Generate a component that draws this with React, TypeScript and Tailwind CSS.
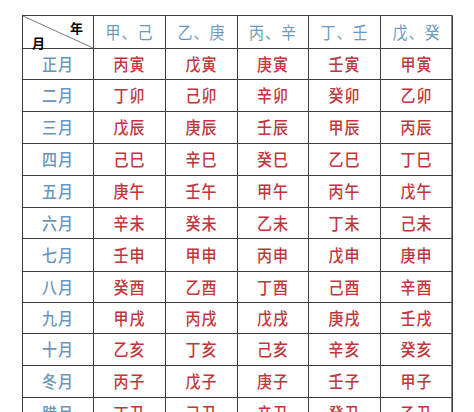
import React from 'react';

const HEADERS = ['甲、己', '乙、庚', '丙、辛', '丁、壬', '戊、癸'];

const ROWS: { month: string; cells: string[]; h: string }[] = [
    { month: '正月', cells: ['丙寅', '戊寅', '庚寅', '壬寅', '甲寅'], h: 'h-[31px]' },
    { month: '二月', cells: ['丁卯', '己卯', '辛卯', '癸卯', '乙卯'], h: 'h-[32px]' },
    { month: '三月', cells: ['戊辰', '庚辰', '壬辰', '甲辰', '丙辰'], h: 'h-[32px]' },
    { month: '四月', cells: ['己巳', '辛巳', '癸巳', '乙巳', '丁巳'], h: 'h-[32px]' },
    { month: '五月', cells: ['庚午', '壬午', '甲午', '丙午', '戊午'], h: 'h-[32px]' },
    { month: '六月', cells: ['辛未', '癸未', '乙未', '丁未', '己未'], h: 'h-[31px]' },
    { month: '七月', cells: ['壬申', '甲申', '丙申', '戊申', '庚申'], h: 'h-[33px]' },
    { month: '八月', cells: ['癸酉', '乙酉', '丁酉', '己酉', '辛酉'], h: 'h-[31px]' },
    { month: '九月', cells: ['甲戌', '丙戌', '戊戌', '庚戌', '壬戌'], h: 'h-[31px]' },
    { month: '十月', cells: ['乙亥', '丁亥', '己亥', '辛亥', '癸亥'], h: 'h-[32px]' },
    { month: '冬月', cells: ['丙子', '戊子', '庚子', '壬子', '甲子'], h: 'h-[32px]' },
    { month: '腊月', cells: ['丁丑', '己丑', '辛丑', '癸丑', '乙丑'], h: 'h-[32px]' },
];

const COLS = 'grid grid-cols-[71px_72px_72px_71px_72px_72px]';
const CELL = 'flex items-center justify-center border-r border-b border-[#3d3d3d]';

export default function App() {
    return (
        <div
            className="h-[412px] w-[474px] overflow-hidden bg-white pt-[15px] pl-[22px]"
            style={{ fontFamily: '"Noto Sans CJK SC", "Noto Sans", sans-serif' }}
        >
            <div className="w-[431px] border-l border-t border-[#3d3d3d] border-r-2 border-r-[#8a8a8a]">
                {/* header */}
                <div className={`${COLS} h-[33px]`}>
                    <div className="relative border-r border-b border-[#3d3d3d]">
                        <svg className="absolute inset-0" width="70" height="32" viewBox="0 0 70 32">
                            <line x1="0" y1="0" x2="70" y2="32" stroke="#7a7a7a" strokeWidth="1" />
                        </svg>
                        <span className="absolute right-[10px] top-[5px] text-[13px] font-bold leading-none text-black">年</span>
                        <span className="absolute left-[9px] top-[20px] text-[13px] font-bold leading-none text-black">月</span>
                    </div>
                    {HEADERS.map((h) => (
                        <div key={h} className={`${CELL} text-[15px] tracking-[1px] text-[#6b9ac0]`}>
                            <span className="inline-block scale-y-110">{h}</span>
                        </div>
                    ))}
                </div>
                {ROWS.map((r) => (
                    <div key={r.month} className={`${COLS} ${r.h}`}>
                        <div className={`${CELL} text-[15px] font-medium tracking-[1px] text-[#6a95b8]`}>
                            <span className="inline-block scale-y-110">{r.month}</span>
                        </div>
                        {r.cells.map((c, i) => (
                            <div key={i} className={`${CELL} text-[15px] font-medium tracking-[1px] text-[#c1363c]`}>
                                <span className="inline-block scale-y-110">{c}</span>
                            </div>
                        ))}
                    </div>
                ))}
            </div>
        </div>
    );
}
